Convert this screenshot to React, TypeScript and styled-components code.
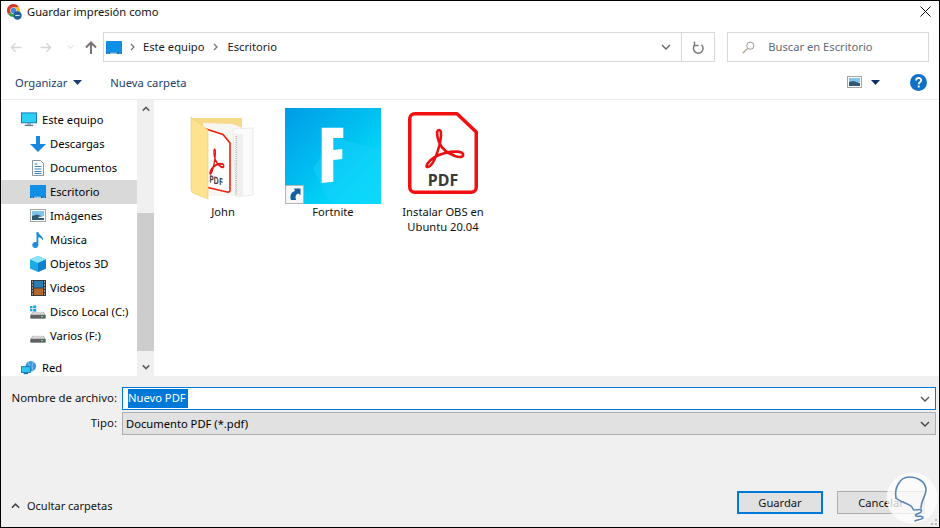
import React from "react";
import styled, { createGlobalStyle } from "styled-components";

const Global = createGlobalStyle`
  html, body { margin: 0; padding: 0; background: #fff; }
  #root { width: 940px; height: 528px; }
  * { box-sizing: border-box; }
`;

const Window = styled.div`
  position: relative;
  width: 940px;
  height: 528px;
  border: 1px solid #000;
  background: #fff;
  display: flex;
  flex-direction: column;
  overflow: hidden;
  font-family: "Noto Sans", "Open Sans", sans-serif;
  font-size: 11.2px;
  color: #000;
`;
const TitleBar = styled.div`
  height: 23px;
  display: flex;
  align-items: center;
  padding: 0 8px 2px 5px;
  gap: 5px;
`;
const TitleText = styled.span`
  flex: 1;
  color: #111;
`;
const NavBar = styled.div`
  height: 38px;
  padding-top: 8px;
  display: flex;
  align-items: stretch;
  padding-left: 8px;
  padding-right: 10px;
`;
const NavArrows = styled.div`
  width: 94px;
  display: flex;
  align-items: center;
  padding-left: 1px;
`;
const ArrowSlot = styled.span<{ $w: number }>`
  width: ${(p) => p.$w}px;
  display: flex;
  align-items: center;
`;
const AddressBar = styled.div`
  width: 613px;
  height: 30px;
  border: 1px solid #d9d9d9;
  display: flex;
  align-items: center;
  padding-left: 2px;
`;
const Crumb = styled.span`
  color: #1a1a1a;
  padding-bottom: 2px;
`;
const CrumbSep = styled.span<{ $w: number }>`
  width: ${(p) => p.$w}px;
  display: flex;
  align-items: center;
  justify-content: center;
`;
const AddressFill = styled.div`
  flex: 1;
`;
const AddressChevron = styled.div`
  width: 33px;
  height: 100%;
  display: flex;
  align-items: center;
  justify-content: center;
  padding-left: 2px;
`;
const RefreshBox = styled.div`
  width: 33px;
  height: 100%;
  border-left: 1px solid #d9d9d9;
  display: flex;
  align-items: center;
  justify-content: center;
`;
const SearchBox = styled.div`
  margin-left: 12px;
  width: 202px;
  height: 30px;
  border: 1px solid #d9d9d9;
  display: flex;
  align-items: center;
  padding-left: 14px;
  gap: 13px;
  color: #5f6b76;
`;
const SearchText = styled.span`
  padding-bottom: 2px;
`;
const CommandBar = styled.div`
  height: 38px;
  border-bottom: 1px solid #ececec;
  display: flex;
  align-items: center;
  padding: 3px 12px 0 14px;
`;
const CommandLink = styled.span`
  color: #1c3c6e;
`;
const CommandCaret = styled.span`
  margin: 0 28px 0 6px;
  display: flex;
`;
const CommandSpacer = styled.div`
  flex: 1;
`;
const ViewCaret = styled.span`
  margin: 0 30px 0 9px;
  display: flex;
`;
const Main = styled.div`
  flex: 1;
  min-height: 0;
  display: flex;
`;
const NavPane = styled.div`
  width: 136px;
  padding-top: 8px;
  overflow: hidden;
`;
const NavRow = styled.div<{ $selected?: boolean; $child?: boolean; $spaced?: boolean }>`
  height: 24px;
  display: flex;
  align-items: center;
  gap: ${(p) => (p.$child ? 4 : 5)}px;
  padding-left: ${(p) => (p.$child ? 29 : 20)}px;
  padding-bottom: 1px;
  margin-top: ${(p) => (p.$spaced ? 8 : 0)}px;
  background: ${(p) => (p.$selected ? "#d9d9d9" : "transparent")};
  white-space: nowrap;
`;
const IconSlot = styled.span`
  width: 16px;
  display: flex;
  justify-content: center;
  flex: none;
`;
const Scrollbar = styled.div`
  width: 17px;
  background: #f0f0f0;
  display: flex;
  flex-direction: column;
`;
const ScrollBtn = styled.div<{ $h: number; $pad?: number }>`
  height: ${(p) => p.$h}px;
  padding-top: ${(p) => p.$pad ?? 0}px;
  display: flex;
  align-items: center;
  justify-content: center;
`;
const ScrollGap = styled.div`
  height: 95px;
`;
const ScrollThumb = styled.div`
  height: 138px;
  background: #cdcdcd;
`;
const FilePane = styled.div`
  flex: 1;
  display: flex;
  align-items: flex-start;
  padding: 8px 0 0 14px;
`;
const FileItem = styled.div`
  width: 110px;
  display: flex;
  flex-direction: column;
  align-items: center;
`;
const FileThumb = styled.div`
  height: 96px;
  display: flex;
  align-items: center;
  justify-content: center;
`;
const FileLabel = styled.div`
  width: 96px;
  text-align: center;
  line-height: 15px;
  color: #111;
`;
const Bottom = styled.div`
  height: 151px;
  background: #f0f0f0;
  padding: 11px 3px 13px 0;
  display: flex;
  flex-direction: column;
`;
const FormRow = styled.div`
  height: 25px;
  display: flex;
  align-items: flex-start;
`;
const FormLabel = styled.label`
  width: 116px;
  font-size: 11.4px;
  line-height: 22px;
  text-align: right;
  margin-right: 5px;
  color: #111;
`;
const FileInput = styled.div`
  flex: 1;
  height: 23px;
  border: 1px solid #0078d7;
  background: #fff;
  display: flex;
  align-items: center;
  padding: 0 5px;
`;
const Selection = styled.span`
  background: #0078d7;
  color: #fff;
  height: 19px;
  line-height: 18px;
  width: 60px;
  white-space: nowrap;
`;
const Grow = styled.div`
  flex: 1;
`;
const TypeSelect = styled.div`
  flex: 1;
  height: 23px;
  border: 1px solid #adadad;
  background: #e1e1e1;
  display: flex;
  align-items: center;
  padding: 0 5px 0 3px;
`;
const SelectText = styled.span`
  padding-bottom: 1px;
`;
const Footer = styled.div`
  margin-top: auto;
  display: flex;
  align-items: center;
  padding-left: 10px;
`;
const HideFolders = styled.div`
  display: flex;
  align-items: center;
  gap: 7px;
  flex: 1;
  font-size: 11px;
  padding-top: 6px;
  color: #111;
`;
const DialogButton = styled.div<{ $primary?: boolean }>`
  width: ${(p) => (p.$primary ? 86 : 88)}px;
  height: 23px;
  margin-right: ${(p) => (p.$primary ? 14 : 11)}px;
  padding-bottom: 1px;
  display: flex;
  align-items: center;
  justify-content: center;
  background: #e1e1e1;
  border: ${(p) => (p.$primary ? "2px solid #0078d7" : "1px solid #adadad")};
  color: #111;
`;
const Watermark = styled.div`
  position: absolute;
  right: 0;
  bottom: 1px;
  width: 54px;
  height: 55px;
`;

const Caret = ({ color = "#1c3c6e" }: { color?: string }) => (
  <svg width="9" height="5" viewBox="0 0 9 5"><path d="M0 0h9L4.5 5z" fill={color} /></svg>
);
const Chevron = ({ up, color = "#555", w = 10, sw = 1.4 }: { up?: boolean; color?: string; w?: number; sw?: number }) => (
  <svg width={w} height="6" viewBox="0 0 10 6">
    <path d={up ? "M1 5l4-4 4 4" : "M1 1l4 4 4-4"} fill="none" stroke={color} strokeWidth={sw} />
  </svg>
);
const ArrowH = ({ flip }: { flip?: boolean }) => (
  <svg width="12" height="11" viewBox="0 0 13 11" style={flip ? { transform: "scaleX(-1)" } : undefined}>
    <path d="M12.5 5.5H1.500M6 1L1.500 5.500 6 10" fill="none" stroke="#d6d6d6" strokeWidth="1.500" />
  </svg>
);
const UpArrow = () => (
  <svg width="12" height="13" viewBox="0 0 12 13">
    <path d="M6 13V2M1 6.500L6 1.500l5 5" fill="none" stroke="#7a7272" strokeWidth="2" />
  </svg>
);
const SepChevron = () => (
  <svg width="5" height="8" viewBox="0 0 5 8"><path d="M1 1l3 3-3 3" fill="none" stroke="#777" strokeWidth="1.300" /></svg>
);
const Refresh = () => (
  <svg width="12" height="13" viewBox="0 0 12 13">
    <path d="M3 3.800A4.800 4.800 0 1 0 9.500 3.800" fill="none" stroke="#777" strokeWidth="1.500" />
    <path d="M2.500 .5V4.500H6.500" fill="none" stroke="#777" strokeWidth="1.400" />
  </svg>
);
const SearchIcon = () => (
  <svg width="13" height="13" viewBox="0 0 13 13">
    <circle cx="8.300" cy="4.700" r="3.600" fill="none" stroke="#9a9a9a" />
    <path d="M5.500 7.500L.8 12.200" stroke="#b5a98a" strokeWidth="1.300" />
  </svg>
);
const CloseIcon = () => (
  <svg width="11" height="11" viewBox="0 0 11 11"><path d="M.5.5l10 10M10.500.5l-10 10" stroke="#111" strokeWidth="1" /></svg>
);
const AppLogo = () => (
  <svg width="16" height="17" viewBox="0 0 16 17">
    <path d="M7.500 1A6.500 6.500 0 0 0 2 11l3-1.500A3.200 3.200 0 0 1 7.500 4.200H13A6.500 6.500 0 0 0 7.500 1z" fill="#d9372c" />
    <path d="M2 11a6.500 6.500 0 0 0 6 3l2-3.400a3.200 3.200 0 0 1-5-1z" fill="#34a04f" />
    <path d="M13 4.200H7.500c2 0 3.300 1.600 3.300 3.300l-1 3 2.600 1A6.500 6.500 0 0 0 13 4.200z" fill="#f2b61c" />
    <circle cx="7.500" cy="7.600" r="2.800" fill="#3f88dc" />
    <circle cx="11.500" cy="12.500" r="4.200" fill="#1f5f96" />
    <path d="M9.200 12.500h4.600" stroke="#cfe2f2" strokeWidth="1.100" />
  </svg>
);
const Desktop = () => (
  <svg width="16" height="13" viewBox="0 0 16 13">
    <rect width="16" height="13" rx=".5" fill="#0f8fe6" />
    <rect y="11.400" width="16" height="1.600" fill="#066ab8" />
    <path d="M1.500 12.200h1M4 12.200h7M13.500 12.200h1" stroke="#dff1ff" strokeWidth="1" />
  </svg>
);
const Monitor = () => (
  <svg width="17" height="15" viewBox="0 0 17 15">
    <rect x=".5" y=".5" width="16" height="10.500" fill="#2cd0f2" stroke="#1476b6" />
    <rect x="6.500" y="11" width="4" height="2" fill="#8aa7b8" />
    <rect x="4" y="13" width="9" height="1.500" fill="#5f7f94" />
  </svg>
);
const Download = () => (
  <svg width="16" height="16" viewBox="0 0 16 16">
    <path d="M6 0h4v8h6l-8 8-8-8h6z" fill="#1a86dc" />
  </svg>
);
const Docs = () => (
  <svg width="16" height="16" viewBox="0 0 16 16">
    <path d="M2.500.5h8l3 3v12h-11z" fill="#fff" stroke="#8b98a3" />
    <path d="M4.500 4h3M4.500 6.500h7M4.500 9h7M4.500 11.500h7M4.500 13.500h7" stroke="#3b7fb8" strokeWidth="1" />
  </svg>
);
const Pictures = () => (
  <svg width="16" height="13" viewBox="0 0 16 13">
    <rect x=".5" y=".5" width="15" height="12" fill="#fff" stroke="#a5a5a5" />
    <rect x="2" y="2" width="12" height="5" fill="#7fc4ea" />
    <path d="M2 7l5-1.500L14 8v3H2z" fill="#2f5a75" />
    <path d="M8 8l6-1v2H9z" fill="#e8f2f8" />
  </svg>
);
const Music = () => (
  <svg width="12" height="16" viewBox="0 0 12 16">
    <path d="M4.500 0h1.700c.5 3 5.500 4 4.800 8.500C10 6.500 8 5.500 6.300 5.200V13a3 3 0 1 1-1.800-2.700z" fill="#1a8ee0" />
  </svg>
);
const Cube = () => (
  <svg width="16" height="16" viewBox="0 0 16 16">
    <path d="M8 0l8 3.500v9L8 16l-8-3.500v-9z" fill="#1fa8e6" />
    <path d="M8 7L0 3.500 8 0l8 3.500z" fill="#8ce4fa" />
    <path d="M8 7v9l8-3.500v-9z" fill="#0f7fcf" />
  </svg>
);
const Film = () => (
  <svg width="15" height="16" viewBox="0 0 15 16">
    <rect width="15" height="16" fill="#3a3a3a" />
    <rect x="3" y="1" width="9" height="6.500" fill="#2a7db5" />
    <rect x="3" y="8.500" width="9" height="6.500" fill="#b5682c" />
    <path d="M1 2h1M1 5h1M1 8h1M1 11h1M1 14h1M13 2h1M13 5h1M13 8h1M13 11h1M13 14h1" stroke="#eee" strokeWidth="1.200" />
  </svg>
);
const Drive = ({ win }: { win?: boolean }) => (
  <svg width="16" height="14" viewBox="0 0 16 14">
    {win && <path d="M0 1h2.500v2.300H0zM3.200 .5h3v2.800h-3zM0 4h2.500v2.300H0zM3.200 4h3v2.800h-3z" fill="#1ba0ea" />}
    <path d="M2.500 7h11l2 3v3.500H.5V10z" fill="#8d8d8d" />
    <path d="M3 6.800h10l1.800 3H1.200z" fill="#d3d3d3" />
    <rect x=".5" y="10" width="15" height="3.500" fill="#5e6264" />
    <rect x="11" y="11" width="2" height="1.200" fill="#58e07a" />
  </svg>
);
const Network = () => (
  <svg width="18" height="16" viewBox="0 0 18 16">
    <circle cx="11" cy="6" r="6" fill="#3f97dd" />
    <path d="M8 1.500c2 3 2 7 0 10M14 1.500c-2 3-2 7 0 10" stroke="#bfe2f7" fill="none" strokeWidth=".7" />
    <rect x=".5" y="6.500" width="10" height="6.500" fill="#2cc6ee" stroke="#1476b6" />
    <rect x="3" y="13.500" width="5" height="1.500" fill="#1476b6" />
  </svg>
);
const ViewIcon = () => (
  <svg width="15" height="12" viewBox="0 0 15 12">
    <rect x=".5" y=".5" width="14" height="11" fill="#fff" stroke="#a5a5a5" />
    <rect x="2" y="2" width="11" height="4" fill="#7fc4ea" />
    <path d="M2 6l4-1 7 2v3H2z" fill="#2f5a75" />
  </svg>
);
const HelpIcon = () => (
  <svg width="17" height="17" viewBox="0 0 17 17">
    <circle cx="8.500" cy="8.500" r="8.500" fill="#0f70c8" />
    <path d="M6 6.500c0-3.300 5.200-3.300 5.200-.3 0 2-2.500 2-2.500 4" fill="none" stroke="#fff" strokeWidth="1.800" />
    <rect x="7.700" y="11.500" width="2" height="2" fill="#fff" />
  </svg>
);
const AcrobatSwirl = ({ sw, color }: { sw: number; color: string }) => (
  <path
    d="M44 31C41 31 42 38 44 43C47 51 53 54 60 57C65 59 69 58 68 55C67 52 58 52 50 54C42 56 36 60 33 64C30 68 32 69 35 67C39 64 43 52 45 44C46 38 47 31 44 31Z"
    fill="none"
    stroke={color}
    strokeWidth={sw}
    strokeLinejoin="round"
  />
);
const PdfIcon = () => (
  <svg width="76" height="88" viewBox="10 9 76 88">
    <path d="M19.750 10.750H62L81.250 29V84.250a5 5 0 0 1-5 5H19.750a5 5 0 0 1-5-5V15.750a5 5 0 0 1 5-5z" fill="#fff" stroke="#f20f0f" strokeWidth="3.500" strokeLinejoin="round" />
    <g transform="translate(0 -4)">
      <AcrobatSwirl sw={2.600} color="#e81010" />
    </g>
    <text x="48" y="83" textAnchor="middle" fontFamily="'Noto Sans', sans-serif" fontWeight="700" fontSize="16" fill="#3a3a3a">PDF</text>
  </svg>
);
const FolderIcon = () => (
  <svg width="68" height="88" viewBox="0 0 68 88">
    <path d="M3 6H53V32H3z" fill="#f7d98a" />
    <path d="M14 11L44 12L56 17V84H14z" fill="#f8f6f0" />
    <path d="M44 17L64 16V83L47 85z" fill="#fbfbfb" stroke="#e6e6e6" strokeWidth=".8" />
    <path d="M47 22V84" stroke="#c4c4c4" strokeWidth="1.500" strokeDasharray="1 1" />
    <path d="M47 22h7V84h-7z" fill="#efefef" />
    <path d="M47.500 24V83" stroke="#bdbdbd" strokeWidth="1.200" strokeDasharray="1 1.200" />
    <path d="M14 15L34 22L41 30V78Q41 80 38 80L18 75z" fill="#fff" />
    <path d="M14 16L34 22.500L41 31V78Q41 80.500 38 80L19 75.500" fill="none" stroke="#f02010" strokeWidth="1.600" />
    <g transform="translate(8.900 17.500) scale(.38 .65)">
      <AcrobatSwirl sw={3.200} color="#e81010" />
    </g>
    <text x="0" y="0" textAnchor="middle" fontFamily="'Noto Sans', sans-serif" fontWeight="700" fontSize="8.500" fill="#444" transform="translate(27 72) skewY(14) scale(.85 1.200)">PDF</text>
    <path d="M2 5L19 18V87L6 82Q2 81 2 77z" fill="#fde28f" stroke="#eccb72" strokeWidth=".6" />
  </svg>
);
const Fortnite = () => (
  <svg width="96" height="96" viewBox="0 0 96 96">
    <defs>
      <linearGradient id="fn" x1="0" y1="0" x2="1" y2="1">
        <stop offset="0" stopColor="#009ce6" />
        <stop offset=".45" stopColor="#00bdf0" />
        <stop offset=".75" stopColor="#00d8f8" />
        <stop offset="1" stopColor="#00e6fa" />
      </linearGradient>
    </defs>
    <rect width="96" height="96" fill="url(#fn)" />
    <path d="M28 60L50 30L96 42V96H45z" fill="#18d0fb" opacity=".5" />
    <path d="M36.700 19.700H58.300V30H48.300V42L57.300 41V51L48.300 52V73.700L36.700 75z" fill="#fff" />
    <rect x=".5" y="77.500" width="18" height="18" fill="#f4f6f8" stroke="#b5b5b5" />
    <path d="M6 92c-1.500-4 0-8 4-9l-1-2.500h6.500V87L13 85.500c-2.500 1-3 3.500-2 6.500z" fill="#155f9c" />
  </svg>
);
const Bulb = () => (
  <svg width="54" height="55" viewBox="0 0 54 55">
    <circle cx="27" cy="27" r="25.500" fill="#fff" fillOpacity=".75" />
    <path d="M11 27C9 17 15 6 24 6C33 6 41 11 41 19C41 25 36 29 36 37" fill="none" stroke="#5a86b4" strokeWidth="1.600" strokeLinecap="round" />
    <path d="M11 27C15 31 23 32 27 36C28 38 28 39 29 39C33 39 38 37 36 41C34 43 29 43 31 45C34 46 38 44 38 47C36 49 31 49 30 50" fill="none" stroke="#5a86b4" strokeWidth="1.600" strokeLinecap="round" strokeLinejoin="round" />
    <path d="M50 48h2v2h-2zM46 52h2v2h-2zM50 52h2v2h-2z" fill="#b4bcc4" />
  </svg>
);

const places: { label: string; icon: React.ReactNode; selected?: boolean }[] = [
  { label: "Descargas", icon: <Download /> },
  { label: "Documentos", icon: <Docs /> },
  { label: "Escritorio", icon: <Desktop />, selected: true },
  { label: "Imágenes", icon: <Pictures /> },
  { label: "Música", icon: <Music /> },
  { label: "Objetos 3D", icon: <Cube /> },
  { label: "Videos", icon: <Film /> },
  { label: "Disco Local (C:)", icon: <Drive win /> },
  { label: "Varios (F:)", icon: <Drive /> },
];

export default function App() {
  return (
    <Window>
      <Global />
      <TitleBar>
        <AppLogo />
        <TitleText>Guardar impresión como</TitleText>
        <CloseIcon />
      </TitleBar>
      <NavBar>
        <NavArrows>
          <ArrowSlot $w={30}><ArrowH /></ArrowSlot>
          <ArrowSlot $w={27}><ArrowH flip /></ArrowSlot>
          <ArrowSlot $w={18}><Chevron color="#d6d6d6" w={7} /></ArrowSlot>
          <ArrowSlot $w={18}><UpArrow /></ArrowSlot>
        </NavArrows>
        <AddressBar>
          <Desktop />
          <CrumbSep $w={21}><SepChevron /></CrumbSep>
          <Crumb>Este equipo</Crumb>
          <CrumbSep $w={23}><SepChevron /></CrumbSep>
          <Crumb>Escritorio</Crumb>
          <AddressFill />
          <AddressChevron><Chevron color="#666" /></AddressChevron>
          <RefreshBox><Refresh /></RefreshBox>
        </AddressBar>
        <SearchBox>
          <SearchIcon />
          <SearchText>Buscar en Escritorio</SearchText>
        </SearchBox>
      </NavBar>
      <CommandBar>
        <CommandLink>Organizar</CommandLink>
        <CommandCaret><Caret /></CommandCaret>
        <CommandLink>Nueva carpeta</CommandLink>
        <CommandSpacer />
        <ViewIcon />
        <ViewCaret><Caret color="#12306a" /></ViewCaret>
        <HelpIcon />
      </CommandBar>
      <Main>
        <NavPane>
          <NavRow>
            <IconSlot><Monitor /></IconSlot>
            Este equipo
          </NavRow>
          {places.map((p) => (
            <NavRow key={p.label} $child $selected={p.selected}>
              <IconSlot>{p.icon}</IconSlot>
              {p.label}
            </NavRow>
          ))}
          <NavRow $spaced>
            <IconSlot><Network /></IconSlot>
            Red
          </NavRow>
        </NavPane>
        <Scrollbar>
          <ScrollBtn $h={18}><Chevron up color="#606060" w={8} sw={2} /></ScrollBtn>
          <ScrollGap />
          <ScrollThumb />
          <ScrollBtn $h={25} $pad={7}><Chevron color="#606060" w={8} sw={2} /></ScrollBtn>
        </Scrollbar>
        <FilePane>
          <FileItem>
            <FileThumb><FolderIcon /></FileThumb>
            <FileLabel>John</FileLabel>
          </FileItem>
          <FileItem>
            <FileThumb><Fortnite /></FileThumb>
            <FileLabel>Fortnite</FileLabel>
          </FileItem>
          <FileItem>
            <FileThumb><PdfIcon /></FileThumb>
            <FileLabel>Instalar OBS en Ubuntu 20.04</FileLabel>
          </FileItem>
        </FilePane>
      </Main>
      <Bottom>
        <FormRow>
          <FormLabel>Nombre de archivo:</FormLabel>
          <FileInput>
            <Selection>Nuevo PDF</Selection>
            <Grow />
            <Chevron color="#555" />
          </FileInput>
        </FormRow>
        <FormRow>
          <FormLabel>Tipo:</FormLabel>
          <TypeSelect>
            <SelectText>Documento PDF (*.pdf)</SelectText>
            <Grow />
            <Chevron color="#444" />
          </TypeSelect>
        </FormRow>
        <Footer>
          <HideFolders>
            <Chevron up color="#444" w={9} sw={1.800} />
            Ocultar carpetas
          </HideFolders>
          <DialogButton $primary>Guardar</DialogButton>
          <DialogButton>Cancelar</DialogButton>
        </Footer>
      </Bottom>
      <Watermark><Bulb /></Watermark>
    </Window>
  );
}
